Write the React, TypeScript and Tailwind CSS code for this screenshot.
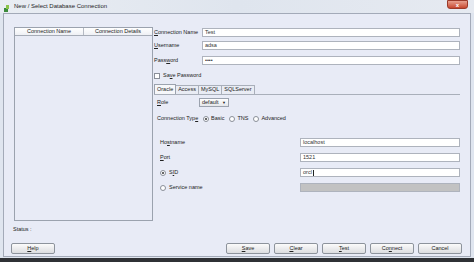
import React from 'react';

const font = { fontFamily: '"Liberation Sans", Arial, sans-serif' };

function Field({ value, disabled, cursor }: { value?: string; disabled?: boolean; cursor?: boolean }) {
  return (
    <div
      className={`h-[9px] flex-1 border border-[#aeb3bd] flex items-center px-[2px] text-[5.5px] leading-none text-[#333] ${
        disabled ? 'bg-[#c2c2c2] border-[#a6a6a6]' : 'bg-white'
      }`}
    >
      {value}
      {cursor && <span className="w-px h-[6px] bg-[#222] ml-px" />}
    </div>
  );
}

function Radio({ checked }: { checked?: boolean }) {
  return (
    <span className="w-[6px] h-[6px] rounded-full border border-[#8a8f99] bg-white flex items-center justify-center">
      {checked && <span className="w-[2px] h-[2px] rounded-full bg-[#333]" />}
    </span>
  );
}

function Btn({ label }: { label: React.ReactNode }) {
  return (
    <div className="w-[44px] h-[11px] rounded-[2px] border border-[#8d939c] bg-gradient-to-b from-[#fbfbfb] to-[#dcdde0] flex items-center justify-center text-[5.5px] text-[#222]">
      {label}
    </div>
  );
}

export default function App() {
  return (
    <div className="w-[474px] h-[262px] bg-[#dfe5ef] flex flex-col overflow-hidden text-[#222]" style={font}>
      {/* Title bar */}
      <div className="h-[13px] flex items-center relative bg-gradient-to-r from-[#e9edf3] via-[#dfe5ee] to-[#e6eaf1]">
        <svg width="6" height="7" viewBox="0 0 6 7" className="ml-[4px] mt-[3px]">
          <rect x="0" y="3" width="4" height="4" fill="#3b8a3c" />
          <rect x="2" y="0" width="3" height="4" fill="#8bc34a" />
        </svg>
        <span className="ml-[4px] text-[6px] text-[#1e1e1e]">New / Select Database Connection</span>
        <div className="absolute right-[6px] top-0 w-[21px] h-[9px] rounded-b-[3px] bg-gradient-to-b from-[#e8a08f] to-[#c6462e] border border-[#9b3a2a] flex items-center justify-center">
          <span className="text-[6px] leading-none text-white font-bold">x</span>
        </div>
      </div>

      {/* Dialog body */}
      <div className="mx-[3px] w-[468px] h-[244px] border border-[#a3aab8] bg-[#e8ebf6] flex flex-col">
        <div className="flex pl-[10px] pt-[13px]">
          {/* Connections table */}
          <div className="w-[139px] h-[194px] border border-[#9ba2ae] flex flex-col">
            <div className="h-[8px] flex border-b border-[#a6acb7] bg-gradient-to-b from-[#ffffff] to-[#eef0f5] text-[5.5px] leading-none">
              <div className="w-[69px] border-r border-[#b5bac4] flex items-center justify-center">Connection Name</div>
              <div className="flex-1 flex items-center justify-center">Connection Details</div>
            </div>
          </div>

          {/* Form */}
          <div className="ml-[1px] w-[306px] flex flex-col text-[5.5px] leading-none">
            <div className="flex items-center mt-[1px]">
              <span className="w-[48px] whitespace-nowrap"><u>C</u>onnection Name</span>
              <Field value="Test" />
            </div>
            <div className="flex items-center mt-[4px]">
              <span className="w-[48px]"><u>U</u>sername</span>
              <Field value="adsa" />
            </div>
            <div className="flex items-center mt-[6px]">
              <span className="w-[48px]">Pass<u>w</u>ord</span>
              <Field value="••••" />
            </div>
            <div className="flex items-center mt-[7px] h-[7px]">
              <span className="w-[6px] h-[6px] border border-[#8a8f99] bg-white" />
              <span className="ml-[3px]">Sa<u>v</u>e Password</span>
            </div>

            {/* Tabs */}
            <div className="flex items-end mt-[6px] h-[10px] border-b border-[#a9afba]">
              <div className="h-[10px] px-[2px] flex items-center border border-b-0 border-[#9ba2ae] bg-[#f6f7fa]">Oracle</div>
              <div className="h-[9px] px-[2px] flex items-center border border-b-0 border-l-0 border-[#a9afba] bg-[#e9ecf4]">Access</div>
              <div className="h-[9px] px-[2px] flex items-center border border-b-0 border-l-0 border-[#a9afba] bg-[#e9ecf4]">MySQL</div>
              <div className="h-[9px] px-[2px] flex items-center border border-b-0 border-l-0 border-[#a9afba] bg-[#e9ecf4]">SQLServer</div>
            </div>

            <div className="flex items-center mt-[3px] pl-[3px]">
              <span className="w-[42px]"><u>R</u>ole</span>
              <div className="w-[30px] h-[9px] border border-[#9ba2ae] bg-gradient-to-b from-white to-[#e4e6ea] flex items-center justify-between px-[2px]">
                <span>default</span>
                <span className="text-[4px]">▼</span>
              </div>
            </div>

            <div className="flex items-center mt-[9px] pl-[3px] gap-[2px]">
              <span className="w-[44px] whitespace-nowrap">Connection Typ<u>e</u></span>
              <Radio checked />
              <span>Basic</span>
              <span className="ml-[3px]"><Radio /></span>
              <span>TNS</span>
              <span className="ml-[3px]"><Radio /></span>
              <span>Advanced</span>
            </div>

            <div className="flex items-center mt-[16px] pl-[6px]">
              <span className="w-[140px]">Ho<u>s</u>tname</span>
              <div className="w-[160px] flex"><Field value="localhost" /></div>
            </div>
            <div className="flex items-center mt-[6px] pl-[6px]">
              <span className="w-[140px]"><u>P</u>ort</span>
              <div className="w-[160px] flex"><Field value="1521" /></div>
            </div>
            <div className="flex items-center mt-[6px] pl-[6px]">
              <span className="w-[140px] flex items-center gap-[3px]"><Radio checked /><span>S<u>I</u>D</span></span>
              <div className="w-[160px] flex"><Field value="orcl" cursor /></div>
            </div>
            <div className="flex items-center mt-[6px] pl-[6px]">
              <span className="w-[140px] flex items-center gap-[3px]"><Radio /><span>Service name</span></span>
              <div className="w-[160px] flex"><Field disabled /></div>
            </div>
          </div>
        </div>

        <div className="pl-[9px] mt-[6px] text-[5.5px] leading-none">Status :</div>

        <div className="flex items-center mt-[10px] pl-[7px] pr-[8px]">
          <Btn label={<span><u>H</u>elp</span>} />
          <div className="flex-1" />
          <div className="flex gap-[4px]">
            <Btn label={<span><u>S</u>ave</span>} />
            <Btn label={<span><u>C</u>lear</span>} />
            <Btn label={<span><u>T</u>est</span>} />
            <Btn label={<span>Co<u>n</u>nect</span>} />
            <Btn label="Cancel" />
          </div>
        </div>
      </div>

      <div className="flex-1 bg-[#2f3135] mt-[1px]" />
    </div>
  );
}
